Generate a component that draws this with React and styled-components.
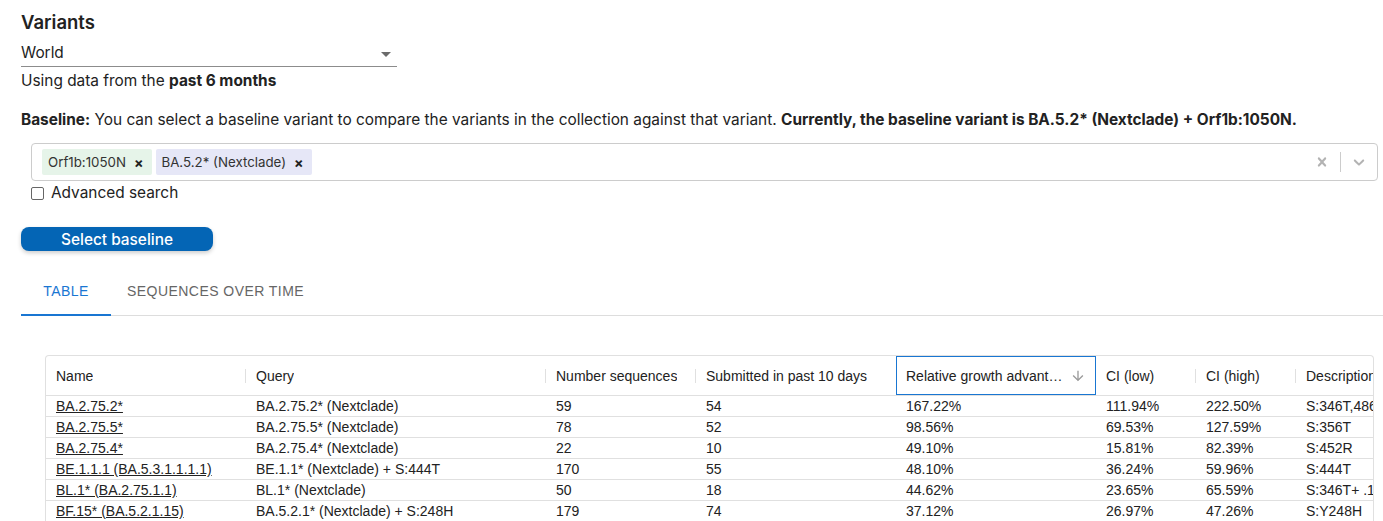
import styled, { createGlobalStyle, css } from 'styled-components'

const GlobalStyle = createGlobalStyle`
  html, body {
    margin: 0;
    padding: 0;
    background: #fff;
  }
  body {
    font-family: Inter, "Noto Sans", sans-serif;
    color: #222;
    overflow: hidden;
  }
`

const Page = styled.div`
  padding: 11px 0 0 21px;
  width: 1362px;
`

const Title = styled.h2`
  margin: 0;
  font-size: 18.5px;
  line-height: 22px;
  font-weight: 600;
`

const Select = styled.div`
  width: 376px;
  height: 33px;
  box-sizing: border-box;
  padding: 8px 6px 0 0;
  border-bottom: 1px solid #8c8c8c;
  display: flex;
  justify-content: space-between;
  font-size: 15.4px;
  line-height: 22px;
  margin-top: 1px;
`

const Caret = styled.span`
  width: 0;
  height: 0;
  margin-top: 10px;
  border-left: 5px solid transparent;
  border-right: 5px solid transparent;
  border-top: 5px solid #6b6b6b;
`

const Text = styled.p`
  margin: ${(p) => p.$mt || 0}px 0 0;
  font-size: 15.4px;
  line-height: 22px;
`

const MultiSelect = styled.div`
  margin: 12px 0 0 10px;
  width: 1347px;
  height: 38px;
  box-sizing: border-box;
  border: 1px solid #cccccc;
  border-radius: 4px;
  display: flex;
  align-items: center;
  padding-left: 10px;
`

const Tags = styled.div`
  flex: 1;
  display: flex;
  gap: 4px;
`

const Tag = styled.span`
  display: inline-flex;
  align-items: center;
  height: 26px;
  padding: 0 8px 0 6px;
  gap: 8px;
  font-size: 13.3px;
  color: #333;
  border-radius: 2px;
  background: ${(p) => (p.$color === 'green' ? '#e6f4e9' : '#e6e7f7')};
`

const TagClose = styled.span`
  font-size: 14px;
  font-weight: 700;
  color: #222;
`

const Indicators = styled.div`
  display: flex;
  align-items: center;
  height: 100%;
  color: #b3b3b3;
`

const Indicator = styled.span`
  display: flex;
  align-items: center;
  padding: 0 9px;
`

const Divider = styled.span`
  width: 1px;
  height: 20px;
  background: #cccccc;
`

const CheckRow = styled.label`
  display: flex;
  align-items: center;
  gap: 7px;
  margin: 1px 0 0 10px;
  font-size: 15.4px;
  line-height: 22px;
  color: #222;
`

const Box = styled.span`
  width: 11px;
  height: 11px;
  border: 1px solid #666;
  border-radius: 2px;
`

const Button = styled.button`
  display: block;
  margin-top: 23px;
  width: 192px;
  height: 24px;
  border: none;
  border-radius: 8px;
  background: #0465b5;
  color: #fff;
  font-family: Inter, sans-serif;
  font-size: 15.4px;
  font-weight: 500;
  box-shadow: 0 2px 4px rgba(0, 0, 0, 0.2);
  padding: 0;
`

const TabBar = styled.div`
  margin-top: 17px;
  display: flex;
  border-bottom: 1px solid #dddddd;
`

const Tab = styled.div`
  min-width: 90px;
  height: 48px;
  box-sizing: border-box;
  padding: 0 16px;
  display: flex;
  align-items: center;
  justify-content: center;
  font-family: "Liberation Sans", Arial, sans-serif;
  font-size: 14px;
  font-weight: 400;
  letter-spacing: 0.45px;
  text-transform: uppercase;
  color: ${(p) => (p.$active ? '#1976d2' : '#666')};
  border-bottom: 2px solid ${(p) => (p.$active ? '#1976d2' : 'transparent')};
  margin-bottom: -1px;
`

const TableWrap = styled.div`
  margin: 39px 0 0 24px;
  width: 1327px;
  border: 1px solid #e0e0e0;
  border-bottom: none;
  border-radius: 4px 4px 0 0;
  overflow: hidden;
  font-family: "Liberation Sans", Arial, sans-serif;
  font-size: 14px;
  color: #222;
`

const Grid = styled.div`
  display: grid;
  grid-template-columns: 200px 300px 150px 200px 200px 100px 100px 200px;
  width: 1450px;
`

const HeadCell = styled.div`
  position: relative;
  height: 39px;
  display: flex;
  align-items: center;
  padding: 0 10px;
  border-bottom: 1px solid #e0e0e0;
  white-space: nowrap;
  overflow: hidden;
  ${(p) =>
    p.$focused &&
    css`
      box-shadow: inset 0 0 0 1px #1976d2;
      justify-content: space-between;
    `}
  ${(p) =>
    p.$sep &&
    css`
      &::after {
        content: '';
        position: absolute;
        right: -1px;
        top: 13px;
        width: 2px;
        height: 14px;
        background: #e0e0e0;
      }
    `}
`

const HeadLabel = styled.span`
  overflow: hidden;
  text-overflow: ellipsis;
`

const SortIcon = styled.span`
  color: #9a9a9a;
  display: flex;
  margin-left: 6px;
`

const Cell = styled.div`
  height: 20px;
  line-height: 20px;
  padding: 0 10px;
  border-bottom: 1px solid #e0e0e0;
  white-space: nowrap;
  overflow: hidden;
`

const NameLink = styled.a`
  color: #222;
  text-decoration: underline;
`

const columns = [
  { label: 'Name', sep: true },
  { label: 'Query', sep: true },
  { label: 'Number sequences', sep: true },
  { label: 'Submitted in past 10 days', sep: false },
  { label: 'Relative growth advantage', focused: true },
  { label: 'CI (low)', sep: true },
  { label: 'CI (high)', sep: true },
  { label: 'Description' },
]

const rows = [
  ['BA.2.75.2*', 'BA.2.75.2* (Nextclade)', '59', '54', '167.22%', '111.94%', '222.50%', 'S:346T,486S'],
  ['BA.2.75.5*', 'BA.2.75.5* (Nextclade)', '78', '52', '98.56%', '69.53%', '127.59%', 'S:356T'],
  ['BA.2.75.4*', 'BA.2.75.4* (Nextclade)', '22', '10', '49.10%', '15.81%', '82.39%', 'S:452R'],
  ['BE.1.1.1 (BA.5.3.1.1.1.1)', 'BE.1.1* (Nextclade) + S:444T', '170', '55', '48.10%', '36.24%', '59.96%', 'S:444T'],
  ['BL.1* (BA.2.75.1.1)', 'BL.1* (Nextclade)', '50', '18', '44.62%', '23.65%', '65.59%', 'S:346T+ .1'],
  ['BF.15* (BA.5.2.1.15)', 'BA.5.2.1* (Nextclade) + S:248H', '179', '74', '37.12%', '26.97%', '47.26%', 'S:Y248H'],
]

const App = () => {
  return (
    <>
      <GlobalStyle />
      <Page>
        <Title>Variants</Title>
        <Select>
          <span>World</span>
          <Caret />
        </Select>
        <Text $mt={3}>
          Using data from the <b>past 6 months</b>
        </Text>
        <Text $mt={17}>
          <b>Baseline:</b> You can select a baseline variant to compare the variants in the collection
          against that variant.{' '}
          <b>Currently, the baseline variant is BA.5.2* (Nextclade) + Orf1b:1050N.</b>
        </Text>
        <MultiSelect>
          <Tags>
            <Tag $color='green'>
              Orf1b:1050N <TagClose>×</TagClose>
            </Tag>
            <Tag $color='purple'>
              BA.5.2* (Nextclade) <TagClose>×</TagClose>
            </Tag>
          </Tags>
          <Indicators>
            <Indicator>
              <svg width='18' height='18' viewBox='0 0 20 20' fill='currentColor'>
                <path d='M14.348 14.849c-0.469 0.469-1.229 0.469-1.697 0l-2.651-3.030-2.651 3.029c-0.469 0.469-1.229 0.469-1.697 0-0.469-0.469-0.469-1.229 0-1.697l2.758-3.15-2.759-3.152c-0.469-0.469-0.469-1.228 0-1.697s1.228-0.469 1.697 0l2.652 3.031 2.651-3.031c0.469-0.469 1.228-0.469 1.697 0s0.469 1.229 0 1.697l-2.758 3.152 2.758 3.15c0.469 0.469 0.469 1.229 0 1.698z' />
              </svg>
            </Indicator>
            <Divider />
            <Indicator>
              <svg width='18' height='18' viewBox='0 0 20 20' fill='currentColor'>
                <path d='M4.516 7.548c0.436-0.446 1.043-0.481 1.576 0l3.908 3.747 3.908-3.747c0.533-0.481 1.141-0.446 1.574 0 0.436 0.445 0.408 1.197 0 1.615-0.406 0.418-4.695 4.502-4.695 4.502-0.217 0.223-0.502 0.335-0.787 0.335s-0.57-0.112-0.789-0.335c0 0-4.287-4.084-4.695-4.502s-0.436-1.17 0-1.615z' />
              </svg>
            </Indicator>
          </Indicators>
        </MultiSelect>
        <CheckRow>
          <Box />
          Advanced search
        </CheckRow>
        <Button>Select baseline</Button>
        <TabBar>
          <Tab $active>Table</Tab>
          <Tab>Sequences over time</Tab>
        </TabBar>
        <TableWrap>
          <Grid>
            {columns.map((c) => (
              <HeadCell key={c.label} $sep={c.sep} $focused={c.focused}>
                <HeadLabel>{c.label}</HeadLabel>
                {c.focused && (
                  <SortIcon>
                    <svg width='16' height='16' viewBox='0 0 24 24' fill='currentColor'>
                      <path d='m20 12-1.41-1.41L13 16.17V4h-2v12.17l-5.58-5.59L4 12l8 8 8-8z' />
                    </svg>
                  </SortIcon>
                )}
              </HeadCell>
            ))}
            {rows.map((r) =>
              r.map((v, i) => (
                <Cell key={r[0] + i}>{i === 0 ? <NameLink href='#'>{v}</NameLink> : v}</Cell>
              ))
            )}
          </Grid>
        </TableWrap>
      </Page>
    </>
  )
}

export default App
